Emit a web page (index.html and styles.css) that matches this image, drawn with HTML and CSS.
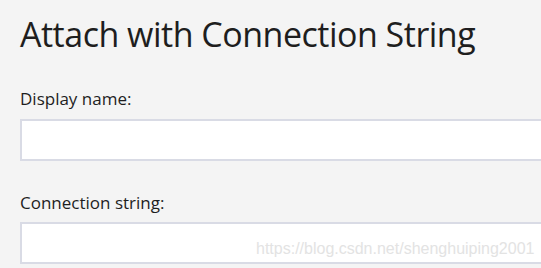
FILE: index.html
```html
<!DOCTYPE html>
<html>
<head>
<meta charset="utf-8">
<link rel="stylesheet" href="styles.css">
</head>
<body>
<div class="page">
  <h1 class="title">Attach with Connection String</h1>
  <div class="field field-first">
    <label class="label">Display name:</label>
    <div class="input"></div>
  </div>
  <div class="field field-second">
    <label class="label">Connection string:</label>
    <div class="input"></div>
  </div>
  <div class="watermark">https://blog.csdn.net/shenghuiping2001</div>
</div>
</body>
</html>
```
FILE: styles.css
```css
html, body {
  margin: 0;
  padding: 0;
  background: #f4f4f4;
  overflow: hidden;
}
.page {
  position: relative;
  width: 541px;
  height: 268px;
  padding-left: 20px;
  box-sizing: border-box;
  overflow: hidden;
  font-family: "Open Sans", "Noto Sans", sans-serif;
  color: #1e1e1e;
}
.title {
  margin: 0;
  padding-top: 12px;
  font-weight: 400;
  font-size: 34px;
  line-height: 44px;
  letter-spacing: -0.5px;
  white-space: nowrap;
}
.field {
  display: flex;
  flex-direction: column;
}
.field-first {
  margin-top: 33px;
}
.field-second {
  margin-top: 32px;
}
.label {
  font-size: 17px;
  line-height: 20px;
  margin-bottom: 10px;
}
.field-second .label {
  margin-bottom: 9px;
}
.input {
  height: 42px;
  width: 100%;
  box-sizing: border-box;
  background: #ffffff;
  border: 2px solid #d9dbe5;
  border-right: 0;
}
.watermark {
  position: absolute;
  left: 256px;
  top: 240px;
  font-family: "Liberation Sans", Arial, sans-serif;
  font-size: 16px;
  color: #e3e3e3;
  white-space: nowrap;
}
```
